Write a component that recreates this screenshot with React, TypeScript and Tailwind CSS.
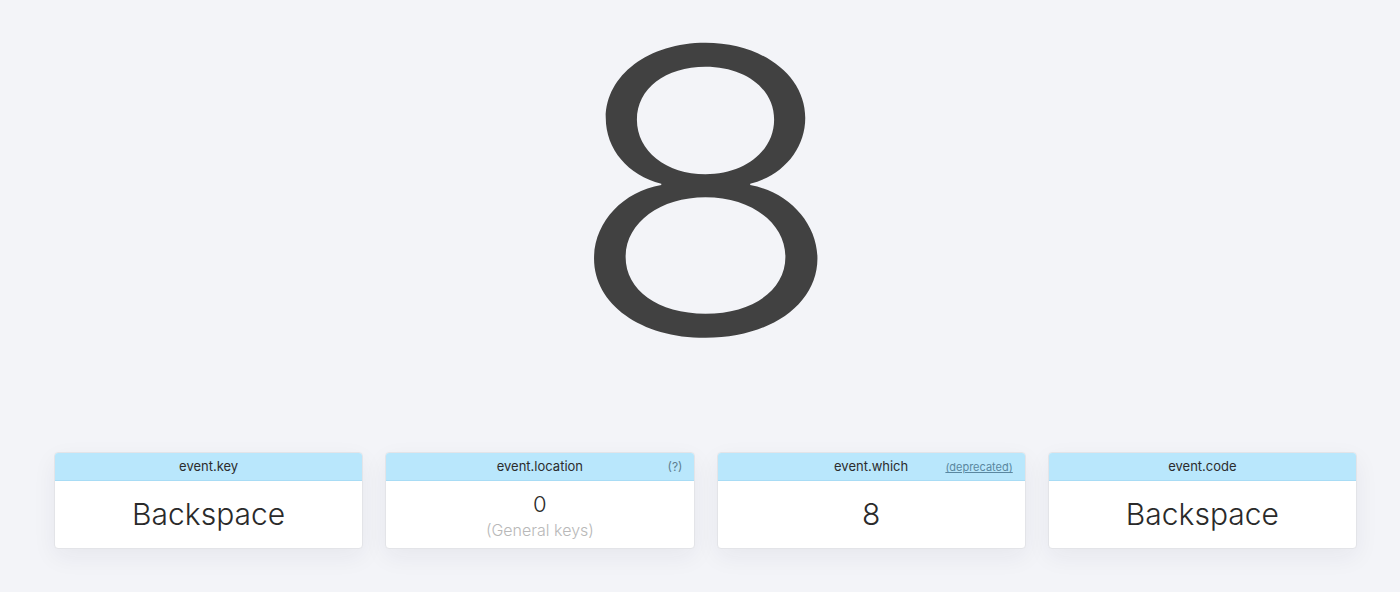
import React from "react";

const font = { fontFamily: "Inter, 'Noto Sans', sans-serif" };

function Card({
  title,
  extra,
  extraLink,
  children,
}: {
  title: string;
  extra?: string;
  extraLink?: boolean;
  children: React.ReactNode;
}) {
  return (
    <div className="flex-1 rounded-[4px] border border-[#e3e4e8] bg-white shadow-[0_8px_24px_rgba(30,40,60,0.06)] overflow-hidden">
      <div className="relative h-[28px] bg-[#b9e7fc] border-b border-[#a8dcf5] flex items-center justify-center text-[13px] text-[#2c2c2c]">
        {title}
        {extra && (
          <span
            className={
              extraLink
                ? "absolute right-[12px] top-[6px] text-[11px] text-[#5a87a0] underline"
                : "absolute right-[11px] top-[5px] text-[12px] text-[#5e7f90]"
            }
          >
            {extra}
          </span>
        )}
      </div>
      <div className="h-[67px] flex flex-col items-center justify-center">{children}</div>
    </div>
  );
}

export default function App() {
  return (
    <div className="w-[1400px] h-[592px] bg-[#f3f4f8] overflow-hidden" style={font}>
      <div className="h-[452px] flex items-start justify-center pl-[11px]">
        <div className="text-[395px] leading-[0.9] font-light text-[#414141] mt-[13px] scale-x-[1.17]">8</div>
      </div>
      <div className="flex gap-[22px] pl-[54px] pr-[43px]">
        <Card title="event.key">
          <div className="text-[30px] font-light text-[#2a2a2a]">Backspace</div>
        </Card>
        <Card title="event.location" extra="(?)">
          <div className="text-[22px] font-light text-[#2a2a2a] leading-none mt-[6px]">0</div>
          <div className="text-[16px] font-light text-[#b8b8b8] mt-[3px]">(General keys)</div>
        </Card>
        <Card title="event.which" extra="(deprecated)" extraLink>
          <div className="text-[30px] font-light text-[#2a2a2a]">8</div>
        </Card>
        <Card title="event.code">
          <div className="text-[30px] font-light text-[#2a2a2a]">Backspace</div>
        </Card>
      </div>
    </div>
  );
}
